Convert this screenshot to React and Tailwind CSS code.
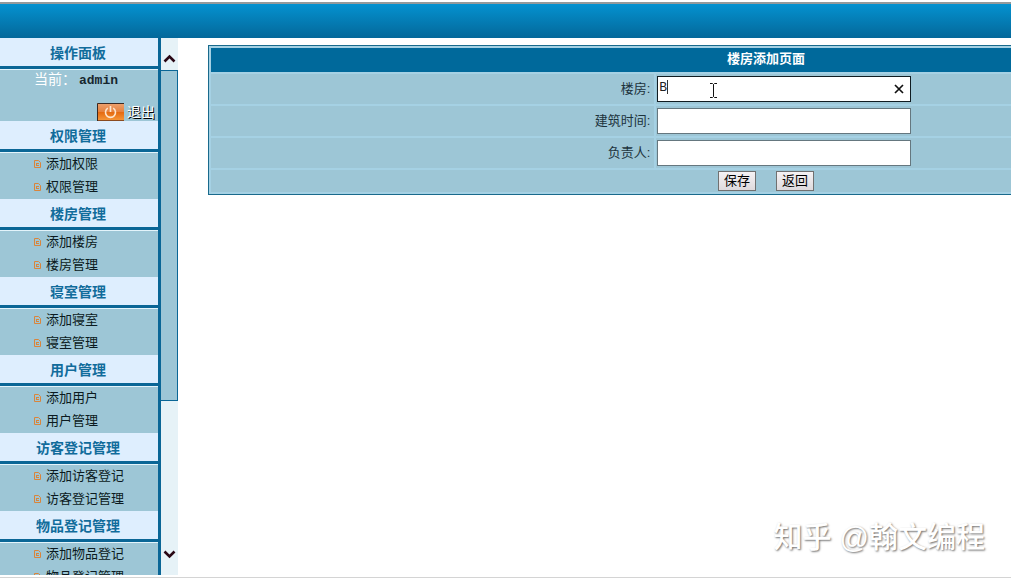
import { useState } from "react";

const menus = [
  { title: "权限管理", items: ["添加权限", "权限管理"] },
  { title: "楼房管理", items: ["添加楼房", "楼房管理"] },
  { title: "寝室管理", items: ["添加寝室", "寝室管理"] },
  { title: "用户管理", items: ["添加用户", "用户管理"] },
  { title: "访客登记管理", items: ["添加访客登记", "访客登记管理"] },
  { title: "物品登记管理", items: ["添加物品登记", "物品登记管理"] },
];

const BulletIcon = () => (
  <svg width="7" height="8" viewBox="0 0 7 8" fill="none" stroke="#d9853c" aria-hidden="true">
    <path d="M0.5 0.5H4.5L6.5 2.5V7.5H0.5Z" />
    <path d="M2 3.5H5M2 5.5H5M2.5 3V6" />
  </svg>
);

const PowerIcon = () => (
  <svg width="27" height="18" viewBox="0 0 27 18" fill="none" aria-hidden="true">
    <defs>
      <linearGradient id="power" x1="0" y1="0" x2="0" y2="1">
        <stop offset="0" stopColor="#eca271" />
        <stop offset="0.48" stopColor="#e5823f" />
        <stop offset="0.52" stopColor="#e56a10" />
        <stop offset="1" stopColor="#f79a3c" />
      </linearGradient>
    </defs>
    <rect width="27" height="18" fill="url(#power)" />
    <path d="M0.5 18V0.5H27" stroke="#3a2a24" />
    <path d="M1 17.5H27" stroke="#8a4a20" />
    <path d="M10.8 5.2A5 5 0 1 0 16.2 5.2" stroke="#fde6cf" strokeWidth="1.6" />
    <path d="M13.5 3V9" stroke="#fde6cf" strokeWidth="1.6" />
  </svg>
);

const Arrow = ({ d }) => (
  <svg width="13" height="9" viewBox="0 0 13 9" fill="none" stroke="#2a0714" strokeWidth="2.6" aria-hidden="true">
    <path d={d} />
  </svg>
);

const PanelTitle = ({ children }) => (
  <h2 className="h-8 border-b border-[#e3f4fb] text-center text-sm font-bold text-[#116c9b]">
    <span className="block h-[31px] border-b-3 border-[#0a6696] bg-[#deeefe] pr-[2px] leading-[30px]">{children}</span>
  </h2>
);

const Sidebar = () => (
  <aside className="flex shrink-0">
    <nav className="w-[161px] overflow-hidden border-r-3 border-[#0a6696] bg-[#9dc6d6]">
      <PanelTitle>操作面板</PanelTitle>
      <div className="flex h-[51px] flex-col justify-between">
        <p className="pl-[34px] text-sm leading-[18px] text-white">
          当前：<b className="ml-[3px] font-['Liberation_Mono'] text-[13px] text-[#17262e]">admin</b>
        </p>
        <a href="#logout" className="flex items-center justify-end gap-[3px] pr-[3px] text-sm leading-[18px] text-white text-shadow-[1px_1px_0_#000]">
          <PowerIcon />
          退出
        </a>
      </div>
      {menus.map((menu) => (
        <section key={menu.title}>
          <PanelTitle>{menu.title}</PanelTitle>
          <ul>
            {menu.items.map((item) => (
              <li key={item}>
                <a href="#menu" className="flex h-[23px] items-center gap-[5px] pb-[2px] pl-[34px] text-[13px] leading-5 text-[#0b1a20]">
                  <BulletIcon />
                  {item}
                </a>
              </li>
            ))}
          </ul>
        </section>
      ))}
    </nav>
    <div className="flex w-[17px] flex-col bg-[#e6f2f7]">
      <button type="button" aria-label="Scroll up" className="flex h-8 items-end justify-center pb-[7px]">
        <Arrow d="M1.5 7.5L6.5 2.5L11.5 7.5" />
      </button>
      <div className="min-h-0 flex-1">
        <div className="h-[70%] border border-l-0 border-[#0a6696] bg-[#9dc6d6]" />
      </div>
      <button type="button" aria-label="Scroll down" className="flex h-8 items-start justify-center pt-[7px]">
        <Arrow d="M1.5 1.5L6.5 6.5L11.5 1.5" />
      </button>
    </div>
  </aside>
);

const inputStyle = "block h-[26px] w-[254px] border bg-white px-px outline-none font-['Liberation_Mono'] text-[13px] text-[#222]";

const BuildingForm = () => {
  const [name, setName] = useState("B");

  return (
    <form className="w-[139%]" onSubmit={(e) => e.preventDefault()}>
      <table className="w-full table-fixed border-separate border-spacing-[2px] border border-[#196a8c] bg-[#a5d1e4] text-[13px] text-[#1c333d]">
        <colgroup>
          <col className="w-[40%]" />
          <col />
        </colgroup>
        <thead>
          <tr>
            <th colSpan={2} className="h-6 bg-[#00699b] p-0 pb-[2px] leading-[22px] font-bold text-white">
              楼房添加页面
            </th>
          </tr>
        </thead>
        <tbody className="[&_td]:bg-[#9dc6d6] [&_td]:p-px">
          <tr>
            <td className="h-[30px] text-right">
              <label htmlFor="building" className="pr-[3px]">楼房:</label>
            </td>
            <td>
              <div className="relative w-[254px]">
                <input
                  id="building"
                  value={name}
                  onChange={(e) => setName(e.target.value)}
                  className={`${inputStyle} border-[#101c22] pb-1`}
                />
                <span className="absolute top-1 left-[10px] h-[14px] w-px bg-[#333]" />
                <svg className="absolute top-[7px] left-[52px]" width="9" height="15" viewBox="0 0 9 15" fill="none" stroke="#111" aria-hidden="true">
                  <path d="M1 0.5H3.5L4.5 1.5L5.5 0.5H8M4.5 1.5V13.5M1 14.5H3.5L4.5 13.5L5.5 14.5H8" />
                </svg>
                <button type="button" aria-label="Clear" onClick={() => setName("")} className="absolute top-2 right-[7px]">
                  <svg width="10" height="10" viewBox="0 0 10 10" stroke="#111" strokeWidth="1.7" aria-hidden="true">
                    <path d="M1 1L9 9M9 1L1 9" />
                  </svg>
                </button>
              </div>
            </td>
          </tr>
          <tr>
            <td className="h-[30px] text-right">
              <label htmlFor="built" className="pr-[3px]">建筑时间:</label>
            </td>
            <td>
              <input id="built" className={`${inputStyle} border-[#65777f]`} />
            </td>
          </tr>
          <tr>
            <td className="h-[30px] text-right">
              <label htmlFor="owner" className="pr-[3px]">负责人:</label>
            </td>
            <td>
              <input id="owner" className={`${inputStyle} border-[#65777f]`} />
            </td>
          </tr>
          <tr>
            <td colSpan={2} className="h-[22px]">
              <div className="flex justify-center gap-5">
                <button type="submit" className="h-5 w-[38px] border border-[#707070] bg-linear-to-b from-[#f5f2f4] to-[#dedadd] leading-[18px] text-black">保存</button>
                <button type="button" className="h-5 w-[38px] border border-[#707070] bg-linear-to-b from-[#f5f2f4] to-[#dedadd] leading-[18px] text-black">返回</button>
              </div>
            </td>
          </tr>
        </tbody>
      </table>
    </form>
  );
};

const App = () => {
  return (
    <div className="relative flex h-screen flex-col overflow-hidden bg-white font-['Liberation_Sans','Noto_Sans_CJK_SC',sans-serif]">
      <header className="mt-[2px] h-9 shrink-0 border-t-2 border-[#949a9c] bg-linear-to-b from-[#0492d0] to-[#04689a]" />
      <div className="flex min-h-0 flex-1">
        <Sidebar />
        <main className="min-w-0 flex-1 overflow-hidden pt-[7px] pl-[30px]">
          <BuildingForm />
        </main>
      </div>
      <footer className="h-[3px] shrink-0 border-b border-[#d4d4d4]" />
      <p className="pointer-events-none absolute right-[26px] bottom-[18px] text-[29px] leading-[44px] font-medium text-white text-shadow-[1px_1px_2px_#707070]">
        知乎 @翰文编程
      </p>
    </div>
  );
};

export default App;
